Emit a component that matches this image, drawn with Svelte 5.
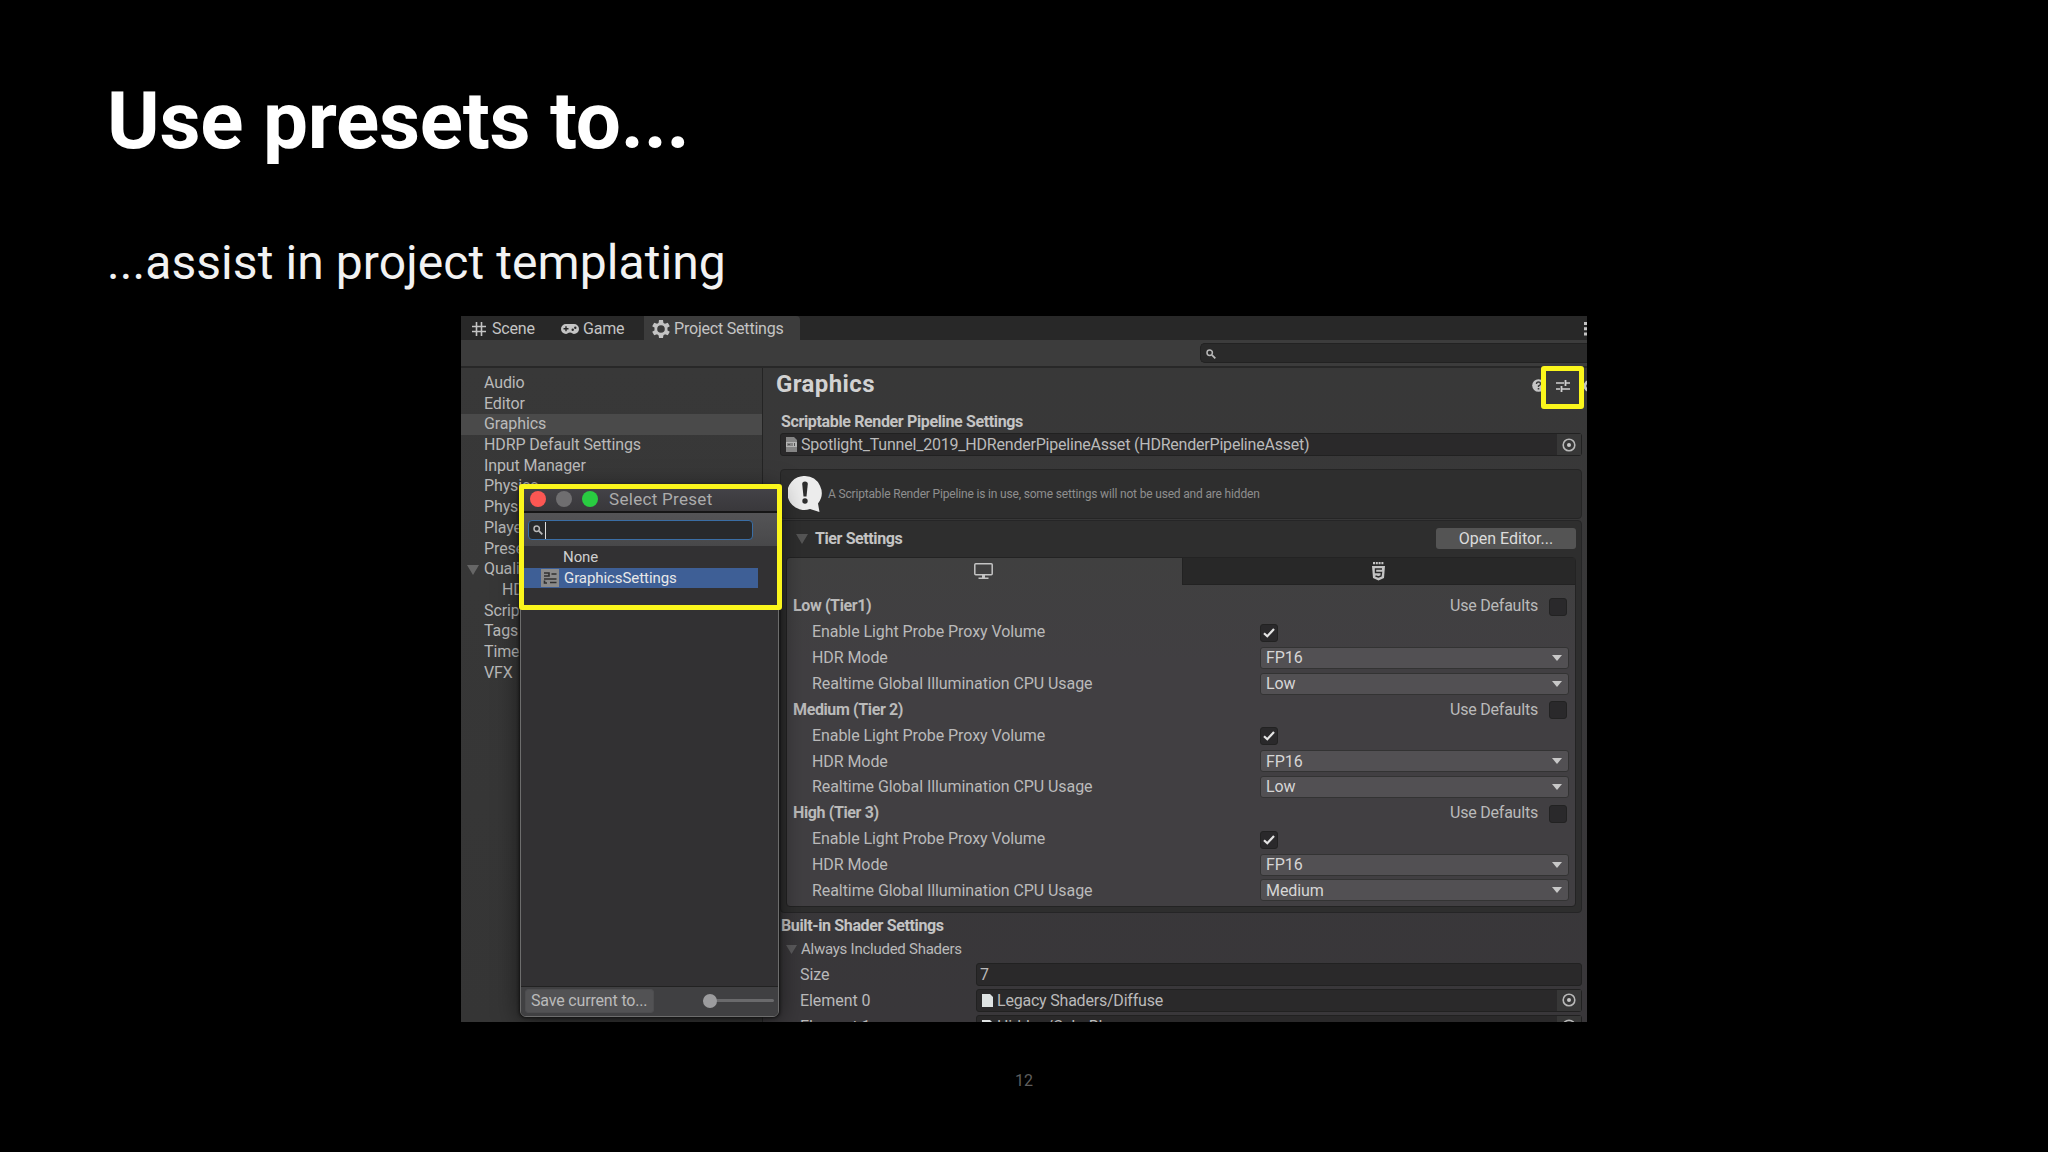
<script>
  const settings = [
    { name: 'Audio' },
    { name: 'Editor' },
    { name: 'Graphics', selected: true },
    { name: 'HDRP Default Settings' },
    { name: 'Input Manager' },
    { name: 'Physics' },
    { name: 'Physics 2D' },
    { name: 'Player' },
    { name: 'Preset Manager' },
    { name: 'Quality', open: true },
    { name: 'HDRP', child: true },
    { name: 'Script Execution Order' },
    { name: 'Tags and Layers' },
    { name: 'Time' },
    { name: 'VFX' },
  ];

  const tiers = [
    { title: 'Low (Tier1)', hdr: 'FP16', gi: 'Low' },
    { title: 'Medium (Tier 2)', hdr: 'FP16', gi: 'Low' },
    { title: 'High (Tier 3)', hdr: 'FP16', gi: 'Medium' },
  ];

  const shaders = ['Legacy Shaders/Diffuse', 'Hidden/CubeBlur'];
</script>

{#snippet picker()}
  <span class="picker">
    <svg width="14" height="14" viewBox="0 0 14 14">
      <circle cx="7" cy="7" r="5.8" fill="none" stroke="#b8b8b8" stroke-width="1.6" />
      <circle cx="7" cy="7" r="2" fill="#c8c8c8" />
    </svg>
  </span>
{/snippet}

{#snippet magnifier()}
  <svg width="10" height="10" viewBox="0 0 10 10">
    <circle cx="3.7" cy="3.7" r="2.7" fill="none" stroke="#b9b9b9" stroke-width="1.5" />
    <path d="M5.8 5.8L9.3 9.3" stroke="#b9b9b9" stroke-width="1.8" />
  </svg>
{/snippet}

{#snippet dropdown(value)}
  <div class="dropdown">
    <span>{value}</span>
    <svg width="10" height="6" viewBox="0 0 10 6"><path d="M0 0H10L5 6Z" fill="#c8c8c8" /></svg>
  </div>
{/snippet}

<main class="slide">
  <h1>Use presets to...</h1>
  <p class="subtitle">...assist in project templating</p>

  <div class="editor">
    <!-- Tabs -->
    <div class="tabs">
      <div class="tab scene">
        <svg width="14" height="14" viewBox="0 0 14 14">
          <path d="M4.5 0V14M9.5 0V14M0 4.5H14M0 9.5H14" stroke="#c4c4c4" stroke-width="1.6" />
        </svg>
        <span>Scene</span>
      </div>
      <div class="tab game">
        <svg width="18" height="10" viewBox="0 0 18 10">
          <path d="M5 0H13A5 5 0 0 1 13 10C11.5 10 11 8.5 9 8.5S6.5 10 5 10A5 5 0 0 1 5 0Z" fill="#c4c4c4" />
          <path d="M2.5 4.8H7.5M5 2.3V7.3" stroke="#282828" stroke-width="1.4" />
          <circle cx="11.7" cy="5.8" r="1.2" fill="#282828" />
          <circle cx="14.3" cy="3.8" r="1.2" fill="#282828" />
        </svg>
        <span>Game</span>
      </div>
      <div class="tab project">
        <svg width="18" height="18" viewBox="0 0 18 18">
          <circle cx="9" cy="9" r="5.2" fill="none" stroke="#c4c4c4" stroke-width="2.8" />
          <path
            d="M7 0H11L11.5 3.5H6.5ZM7 18H11L11.5 14.5H6.5ZM15.8 2.8L17.8 6.2L14.8 8L12.3 4ZM.2 11.8L2.2 15.2L5.7 14L3.2 10ZM2.2 2.8L.2 6.2L3.2 8L5.7 4ZM17.8 11.8L15.8 15.2L12.3 14L14.8 10Z"
            fill="#c4c4c4"
          />
        </svg>
        <span>Project Settings</span>
      </div>
      <svg class="kebab" width="3" height="14" viewBox="0 0 3 14">
        <path d="M0 0H3V3H0ZM0 5.3H3V8.3H0ZM0 10.6H3V13.6H0Z" fill="#c4c4c4" />
      </svg>
    </div>

    <div class="toolbar">
      <div class="toolbar-search">{@render magnifier()}</div>
    </div>

    <div class="body">
      <!-- Category list -->
      <div class="sidebar">
        {#each settings as item}
          <div class="item" class:selected={item.selected} class:child={item.child}>
            {#if item.open}
              <svg class="fold" width="12" height="10" viewBox="0 0 12 10"><path d="M0 0H12L6 10Z" fill="#666" /></svg>
            {/if}
            {item.name}
          </div>
        {/each}
      </div>

      <div class="content">
        <div class="title-row">
          <h2>Graphics</h2>
          <svg class="help" width="13" height="13" viewBox="0 0 13 13">
            <circle cx="6.5" cy="6.5" r="6.3" fill="#c4c4c4" />
            <path d="M4.5 5Q4.5 3 6.5 3T8.5 5Q8.5 6 6.5 7V8" fill="none" stroke="#3a3a3a" stroke-width="1.4" />
            <path d="M5.7 9H7.3V10.5H5.7Z" fill="#3a3a3a" />
          </svg>
          <svg class="preset" width="14" height="14" viewBox="0 0 14 14">
            <path d="M0 4H8M10 4H14M0 10H4M6 10H14" stroke="#d0d0d0" stroke-width="1.5" />
            <path d="M9.5 1V7M5.5 7V13" stroke="#d0d0d0" stroke-width="1.8" />
          </svg>
          <svg class="gear-edge" width="4" height="14" viewBox="0 0 4 14">
            <path d="M4 1.5L2.5 2.5L0 6V8L2.5 11.5L4 12.5V9L3 7L4 5Z" fill="#c4c4c4" />
          </svg>
        </div>

        <h3>Scriptable Render Pipeline Settings</h3>
        <div class="field asset">
          <svg width="11" height="15" viewBox="0 0 11 15">
            <path d="M0 0H8L11 3V15H0Z" fill="#858585" />
            <path d="M0 5H11V10H0Z" fill="#b5b5b5" />
            <path d="M2 6V9M4 6V9M2 7.5H4M6 6V9M8.5 6V9" stroke="#555" stroke-width="1" />
          </svg>
          <span>Spotlight_Tunnel_2019_HDRenderPipelineAsset (HDRenderPipelineAsset)</span>
          {@render picker()}
        </div>

        <div class="notice">
          <svg width="34" height="37" viewBox="0 0 34 37">
            <path d="M17 0A17 17 0 0 1 30 27.5L31.5 36L22 33A17 17 0 1 1 17 0Z" fill="#ececec" />
            <path d="M14.2 8Q14.2 5.5 17 5.5T19.8 8L18.5 20.5H15.5Z" fill="#2d2d2d" />
            <circle cx="17" cy="25" r="2.7" fill="#2d2d2d" />
          </svg>
          <span>A Scriptable Render Pipeline is in use, some settings will not be used and are hidden</span>
        </div>

        <div class="tier-box">
          <div class="tier-head">
            <svg width="12" height="10" viewBox="0 0 12 10"><path d="M0 0H12L6 10Z" fill="#555" /></svg>
            <b>Tier Settings</b>
            <span class="open-editor">Open Editor...</span>
          </div>
          <div class="platforms">
            <div class="platform-tabs">
              <div class="platform active">
                <svg width="19" height="17" viewBox="0 0 19 17">
                  <rect x=".8" y=".8" width="17.4" height="11" rx="1" fill="none" stroke="#c4c4c4" stroke-width="1.5" />
                  <path d="M8 12H11V14.5H14.5V16H4.5V14.5H8Z" fill="#c4c4c4" />
                </svg>
              </div>
              <div class="platform">
                <svg width="13" height="19" viewBox="0 0 13 19">
                  <path d="M1 1.2H12" stroke="#c4c4c4" stroke-width="2.2" stroke-dasharray="2 .8" />
                  <path d="M0 4H13L12 16L6.5 18.5L1 16Z" fill="#c4c4c4" />
                  <path d="M10 7H3.5V10.5H9.5L9 14L6.5 15L3.5 14" fill="none" stroke="#282828" stroke-width="1.4" />
                </svg>
              </div>
            </div>
            {#each tiers as tier}
              <div class="row">
                <b>{tier.title}</b>
                <span class="defaults">Use Defaults</span>
                <span class="check"></span>
              </div>
              <div class="row prop">
                <span class="label">Enable Light Probe Proxy Volume</span>
                <span class="check">
                  <svg width="12" height="10" viewBox="0 0 12 10">
                    <path d="M1 5.2L4.3 8.3L11 1" fill="none" stroke="#e4e4e4" stroke-width="2.2" />
                  </svg>
                </span>
              </div>
              <div class="row prop">
                <span class="label">HDR Mode</span>
                {@render dropdown(tier.hdr)}
              </div>
              <div class="row prop">
                <span class="label">Realtime Global Illumination CPU Usage</span>
                {@render dropdown(tier.gi)}
              </div>
            {/each}
          </div>
        </div>

        <h3 class="builtin">Built-in Shader Settings</h3>
        <div class="included">
          <svg width="11" height="9" viewBox="0 0 11 9"><path d="M0 0H11L5.5 9Z" fill="#5c5b5d" /></svg>
          <span>Always Included Shaders</span>
        </div>
        <div class="shader-row">
          <span class="shader-label">Size</span>
          <div class="field size">7</div>
        </div>
        {#each shaders as shader, i}
          <div class="shader-row">
            <span class="shader-label">Element {i}</span>
            <div class="field">
              <svg width="11" height="13" viewBox="0 0 11 13"><path d="M0 0H8L11 3V13H0Z" fill="#dfe3e3" /></svg>
              <span>{shader}</span>
              {@render picker()}
            </div>
          </div>
        {/each}
      </div>
    </div>

    <!-- Preset picker window -->
    <div class="window">
      <div class="window-title">
        <i class="dot red"></i>
        <i class="dot gray"></i>
        <i class="dot green"></i>
        <span>Select Preset</span>
      </div>
      <div class="window-search">
        <div class="search-input">
          {@render magnifier()}
          <i class="caret"></i>
        </div>
      </div>
      <div class="options">
        <div class="option">None</div>
        <div class="option active">
          <svg width="18" height="18" viewBox="0 0 18 18">
            <rect width="18" height="18" fill="#8b8b8b" />
            <path d="M3 4H8V7H3M10.5 5H15.5M3 10H15.5M6 14H3.5V11.5M9 13.5H15.5" fill="none" stroke="#303030" stroke-width="1.6" />
          </svg>
          GraphicsSettings
        </div>
      </div>
      <div class="window-foot">
        <span class="save">Save current to...</span>
        <div class="slider"><i></i></div>
      </div>
    </div>

    <div class="highlight window-highlight"></div>
    <div class="highlight icon-highlight"></div>
  </div>

  <footer>12</footer>
</main>

<style>
  :global(body) {
    background: #000;
  }

  .slide {
    display: flex;
    flex-direction: column;
    width: 2048px;
    height: 1152px;
    overflow: hidden;
    background: #000;
    color: #bababa;
    font-family: Roboto, sans-serif;
    font-size: 16px;
  }

  .slide * {
    box-sizing: border-box;
  }

  svg {
    display: block;
    flex: none;
  }

  h1 {
    margin: 74px 0 0 107px;
    color: #fff;
    font-size: 80px;
    font-weight: 700;
    letter-spacing: -0.25px;
    line-height: 94px;
    white-space: nowrap;
  }

  .subtitle {
    margin: 67px 0 0 107px;
    color: #f2f2f2;
    font-size: 48px;
    letter-spacing: 0.08px;
    line-height: 56px;
    white-space: nowrap;
  }

  .editor {
    position: relative;
    display: flex;
    flex-direction: column;
    width: 1126px;
    height: 706px;
    margin: 25px 0 0 461px;
    overflow: hidden;
    background: #383838;
    letter-spacing: -0.07px;
    white-space: nowrap;
  }

  /* Tabs */
  .tabs {
    display: flex;
    flex: none;
    height: 24px;
    background: #282828;
  }

  .tab {
    display: flex;
    align-items: center;
    padding-top: 1px;
    color: #c4c4c4;
    letter-spacing: -0.2px;
  }

  .scene {
    gap: 6px;
    width: 88px;
    padding-left: 11px;
  }

  .game {
    gap: 4px;
    width: 95px;
    padding-left: 12px;
  }

  .project {
    gap: 4px;
    width: 156px;
    padding-left: 8px;
    border-radius: 0 4px 0 0;
    background: #3c3c3c;
  }

  .kebab {
    margin: 6px 0 0 auto;
  }

  .toolbar {
    display: flex;
    flex: none;
    justify-content: flex-end;
    height: 28px;
    padding-top: 3px;
    border-bottom: 2px solid #282828;
    background: #3c3c3c;
  }

  .toolbar-search {
    display: flex;
    align-items: center;
    width: 387px;
    height: 20px;
    padding: 1px 0 0 5px;
    border: 1px solid #222;
    border-right: 0;
    border-radius: 5px 0 0 5px;
    background: #2a2a2a;
  }

  .body {
    display: flex;
    flex: 1;
    min-height: 0;
  }

  /* Sidebar */
  .sidebar {
    flex: none;
    width: 302px;
    padding-top: 5px;
    border-right: 1px solid #242424;
    background: linear-gradient(#383838, #353535);
    letter-spacing: -0.12px;
  }

  .item {
    position: relative;
    height: 20.7px;
    padding-left: 23px;
    line-height: 20.7px;
  }

  .item.selected {
    background: #4a4a4a;
  }

  .item.child {
    padding-left: 41px;
  }

  .fold {
    position: absolute;
    top: 6px;
    left: 6px;
  }

  /* Content */
  .content {
    flex: 1;
    min-width: 0;
    padding: 0 5px 0 17px;
    background: linear-gradient(#383838, #39373a);
  }

  .title-row {
    display: flex;
    height: 44px;
    margin: 0 -5px 0 -4px;
  }

  h2 {
    margin: 2px auto 0 0;
    color: #d2d2d2;
    font-size: 24px;
    font-weight: 700;
    letter-spacing: 0.4px;
    line-height: 28px;
  }

  .help {
    margin-top: 11px;
  }

  .preset {
    margin: 11px 13px 0 11px;
  }

  .gear-edge {
    margin-top: 11px;
  }

  h3 {
    margin: 0;
    padding-left: 1px;
    color: #c4c4c4;
    font-size: 16px;
    font-weight: 700;
    letter-spacing: -0.36px;
    line-height: 20px;
  }

  .field {
    display: flex;
    align-items: center;
    flex: 1;
    height: 23px;
    padding-left: 5px;
    border: 1px solid #212121;
    border-radius: 3px;
    background: #2a292a;
    letter-spacing: -0.21px;
  }

  .field svg {
    margin-right: 4px;
  }

  .asset {
    margin-top: 1px;
  }

  .picker {
    display: flex;
    align-items: center;
    justify-content: center;
    width: 24px;
    height: 21px;
    margin-left: auto;
    background: #373737;
  }

  .picker svg {
    margin: 0;
  }

  .notice {
    display: flex;
    align-items: center;
    gap: 6px;
    height: 50px;
    margin-top: 13px;
    padding-left: 7px;
    border: 1px solid #252525;
    border-radius: 4px;
    background: #2e2e2e;
    color: #8e8e8e;
    font-size: 12px;
    letter-spacing: -0.17px;
  }

  .tier-box {
    height: 393px;
    margin-top: 1px;
    padding: 0 5px;
    border: 1px solid #252526;
    border-radius: 4px;
    background: #2e2e2e;
  }

  .tier-head {
    display: flex;
    align-items: center;
    height: 36px;
    padding: 0 0 1px 10px;
  }

  .tier-head b {
    margin: 0 0 1px 7px;
    color: #c4c4c4;
    letter-spacing: -0.4px;
  }

  .open-editor {
    width: 140px;
    height: 21px;
    margin-left: auto;
    border-radius: 3px;
    background: #545454;
    color: #dcdcdc;
    letter-spacing: 0;
    line-height: 21px;
    text-align: center;
  }

  .platforms {
    height: 350px;
    border: 1px solid #232323;
    border-radius: 4px;
    background: linear-gradient(#404040, #413f42 30%);
  }

  .platform-tabs {
    display: flex;
    height: 27px;
    margin-bottom: 8px;
  }

  .platform {
    display: flex;
    flex: 1;
    align-items: center;
    justify-content: center;
    border-bottom: 1px solid #222;
    border-left: 1px solid #222;
    background: #282828;
  }

  .platform.active {
    padding-right: 2px;
    border: 0;
    background: none;
  }

  .row {
    display: flex;
    align-items: center;
    height: 25.86px;
    padding: 0 6px;
  }

  .row b {
    margin-right: auto;
    letter-spacing: -0.38px;
  }

  .defaults {
    margin-right: 11px;
    letter-spacing: -0.21px;
  }

  .check {
    display: flex;
    align-items: center;
    justify-content: center;
    width: 18px;
    height: 18px;
    margin: 2px 2px 0 0;
    border: 1px solid #222;
    border-radius: 3px;
    background: #2a292b;
  }

  .label {
    flex: none;
    width: 467px;
    padding-left: 19px;
  }

  .dropdown {
    display: flex;
    align-items: center;
    justify-content: space-between;
    width: 309px;
    height: 22px;
    padding: 0 6px 0 5px;
    border: 1px solid #333;
    border-radius: 3px;
    background: #525053;
    color: #d6d6d6;
  }

  .builtin {
    margin-top: 3px;
  }

  .included {
    display: flex;
    align-items: center;
    gap: 4px;
    height: 25px;
    padding: 1px 0 0 6px;
    font-size: 15px;
    letter-spacing: -0.25px;
  }

  .shader-row {
    display: flex;
    align-items: center;
    height: 26px;
  }

  .shader-label {
    width: 196px;
    padding-left: 20px;
  }

  .size {
    padding-left: 3px;
  }

  /* Preset window */
  .window {
    position: absolute;
    top: 170px;
    left: 59px;
    display: flex;
    flex-direction: column;
    width: 259px;
    height: 531px;
    border: 1px solid #6d6d6d;
    border-radius: 6px;
    background: #323133;
    box-shadow: 0 0 3px 1px #111, 0 4px 26px rgba(0, 0, 0, 0.55);
    overflow: hidden;
  }

  .window-title {
    display: flex;
    align-items: center;
    flex: none;
    height: 26px;
    padding-left: 9px;
    border-bottom: 2px solid #161616;
    background: linear-gradient(#444348, #39383b);
    color: #acacac;
    font-size: 17px;
    letter-spacing: 0.3px;
  }

  .dot {
    width: 16px;
    height: 16px;
    margin-right: 10px;
    border-radius: 50%;
  }

  .red {
    background: #fc5753;
  }

  .gray {
    background: #6f6e70;
  }

  .green {
    background: #29cc41;
  }

  .window-title span {
    margin-left: 1px;
  }

  .window-search {
    flex: none;
    height: 33px;
    padding: 7px 0 0 7px;
    background: linear-gradient(#545456, #48484a);
  }

  .search-input {
    display: flex;
    align-items: center;
    width: 225px;
    height: 20px;
    padding-left: 4px;
    border: 1px solid #3a6ea5;
    border-radius: 4px;
    background: #282a2c;
  }

  .caret {
    width: 1px;
    height: 17px;
    margin-left: 2px;
    background: #ddd;
  }

  .options {
    flex: 1;
    padding-top: 1px;
  }

  .option {
    display: flex;
    align-items: center;
    width: 237px;
    height: 20.5px;
    padding-left: 42px;
    color: #cfcfcf;
    font-size: 15px;
  }

  .option.active {
    gap: 5px;
    padding-left: 20px;
    background: #3e5f96;
    color: #e8e8e8;
  }

  .window-foot {
    display: flex;
    align-items: center;
    flex: none;
    height: 30px;
    padding: 0 4px 2px;
    border-top: 1px solid #222;
    background: #404042;
  }

  .save {
    width: 129px;
    height: 24px;
    padding-left: 5px;
    border: 1px solid #4d4d4f;
    border-radius: 3px;
    background: #525254;
    letter-spacing: -0.17px;
    line-height: 21px;
  }

  .slider {
    display: flex;
    align-items: center;
    width: 71px;
    height: 3px;
    margin-left: auto;
    border-radius: 2px;
    background: #6a6a6c;
  }

  .slider i {
    width: 14px;
    height: 14px;
    border-radius: 50%;
    background: #9c9c9e;
  }

  .highlight {
    position: absolute;
    border: 5px solid #fbf61c;
    border-radius: 3px;
  }

  .window-highlight {
    top: 168px;
    left: 58px;
    width: 263px;
    height: 126px;
  }

  .icon-highlight {
    top: 50px;
    left: 1080px;
    width: 43px;
    height: 43px;
  }

  footer {
    margin-top: 50px;
    color: #5e5e5e;
    font-size: 16px;
    line-height: 18px;
    text-align: center;
  }
</style>
